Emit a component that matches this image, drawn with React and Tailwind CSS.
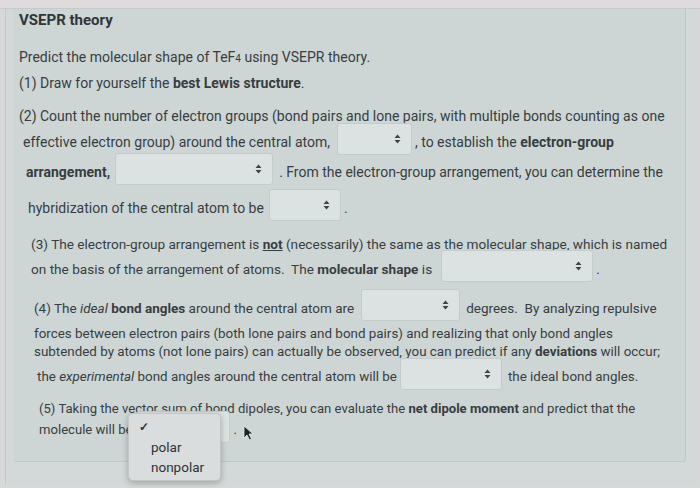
import React from 'react'

function Sel({ w }) {
  return (
    <span className={`relative inline-flex h-[32px] shrink-0 items-center rounded-[3px] border border-[#c4cccb] bg-[#dce2e1] ${w}`}>
      <svg className="absolute right-[10px] top-1/2 -translate-y-1/2" width="7" height="10" viewBox="0 0 7 10">
        <path d="M3.5 0.5 L6.5 4 L0.5 4 Z M3.5 9.5 L6.5 6 L0.5 6 Z" fill="#3d4347" />
      </svg>
    </span>
  )
}

function Row({ mt, ml, size = 'text-[14px]', children }) {
  return (
    <div className={`flex h-[18px] items-center whitespace-nowrap ${mt} ${ml} ${size}`}>
      {children}
    </div>
  )
}

export default function App() {
  return (
    <div
      className="relative h-[488px] w-[700px] overflow-hidden bg-[#d6d9d8] text-[#373d41]"
      style={{ fontFamily: 'Roboto, "Noto Sans", sans-serif' }}
    >
      <div className="h-[9px] bg-[#dfdadb] border-b border-[#c6cbca]" />
      <div className="ml-[5px] mr-[2px] h-[476px] border-l border-[#c3c9c8] bg-[#d3d9d8] pl-[8px] pr-[12px]">
        <div className="h-[453px] rounded-b-[3px] border-b border-r border-[#c0c8c7] bg-[#cdd6d5] pt-[2px]">
          <Row mt="mt-[0px]" ml="ml-[5px]" size="text-[15px]">
            <b className="text-[#2f3539]">VSEPR theory</b>
          </Row>
          <Row mt="mt-[19px]" ml="ml-[5px]">
            Predict the molecular shape of TeF<sub className="text-[10px] relative top-[2px]">4</sub>&nbsp;using VSEPR theory.
          </Row>
          <Row mt="mt-[8px]" ml="ml-[5px]">
            (1) Draw for yourself the&nbsp;<b>best Lewis structure</b>.
          </Row>
          <Row mt="mt-[15px]" ml="ml-[5px]">
            (2) Count the number of electron groups (bond pairs and lone pairs, with multiple bonds counting as one
          </Row>
          <Row mt="mt-[8px]" ml="ml-[9px]">
            effective electron group) around the central atom,
            <span className="ml-[7px]"><Sel w="w-[75px]" /></span>
            <span className="ml-[3px]">, to establish the&nbsp;<b>electron-group</b></span>
          </Row>
          <Row mt="mt-[12px]" ml="ml-[12px]">
            <b>arrangement,</b>
            <span className="ml-[5px]"><Sel w="w-[158px]" /></span>
            <span className="ml-[6px]">. From the electron-group arrangement, you can determine the</span>
          </Row>
          <Row mt="mt-[18px]" ml="ml-[14px]">
            hybridization of the central atom to be
            <span className="ml-[5px]"><Sel w="w-[72px]" /></span>
            <span className="ml-[3px]">.</span>
          </Row>
          <Row mt="mt-[18px]" ml="ml-[17px]" size="text-[13.6px]">
            (3) The electron-group arrangement is&nbsp;<b className="underline">not</b>&nbsp;(necessarily) the same as the molecular shape, which is named
          </Row>
          <Row mt="mt-[7px]" ml="ml-[17px]" size="text-[13.6px]">
            on the basis of the arrangement of atoms.&nbsp; The&nbsp;<b>molecular shape</b>&nbsp;is
            <span className="ml-[9px]"><Sel w="w-[152px]" /></span>
            <span className="ml-[3px]">.</span>
          </Row>
          <Row mt="mt-[21px]" ml="ml-[20px]" size="text-[13.5px]">
            (4) The&nbsp;<i>ideal</i>&nbsp;<b>bond angles</b>&nbsp;around the central atom are
            <span className="ml-[7px]"><Sel w="w-[99px]" /></span>
            <span className="ml-[6px]">degrees.&nbsp; By analyzing repulsive</span>
          </Row>
          <Row mt="mt-[8px]" ml="ml-[20px]" size="text-[13.4px]">
            forces between electron pairs (both lone pairs and bond pairs) and realizing that only bond angles
          </Row>
          <Row mt="mt-[0px]" ml="ml-[20px]" size="text-[13.4px]">
            subtended by atoms (not lone pairs) can actually be observed, you can predict if any&nbsp;<b>deviations</b>&nbsp;will occur;
          </Row>
          <Row mt="mt-[7px]" ml="ml-[23px]" size="text-[13.4px]">
            the&nbsp;<i>experimental</i>&nbsp;bond angles around the central atom will be
            <span className="ml-[3px]"><Sel w="w-[102px]" /></span>
            <span className="ml-[6px]">the ideal bond angles.</span>
          </Row>
          <Row mt="mt-[14px]" ml="ml-[25px]" size="text-[13.1px]">
            (5) Taking the vector sum of bond dipoles, you can evaluate the&nbsp;<b>net dipole moment</b>&nbsp;and predict that the
          </Row>
          <Row mt="mt-[3px]" ml="ml-[25px]" size="text-[13.1px]">
            molecule will be
            <span className="ml-[4px]"><Sel w="w-[94px]" /></span>
            <span className="ml-[3px]">.</span>
            <svg className="ml-[6px] mt-[6px]" width="12" height="16" viewBox="0 0 12 16">
              <path d="M1 1 L1 13 L4 10 L6.5 15 L8.5 14 L6 9 L10 9 Z" fill="#1f2326" stroke="#e8eaea" strokeWidth="0.8" />
            </svg>
          </Row>
        </div>
      </div>

      <div className="absolute left-[128px] top-[413px] w-[93px] rounded-[5px] border border-[#c2c6c6] bg-[#dadddd] py-[3px] text-[13.5px] text-[#2e3337] shadow-[0_2px_6px_rgba(0,0,0,0.25)]">
        <div className="flex h-[20px] items-center pl-[10px]">
          <span className="text-[12px] font-bold">✓</span>
        </div>
        <div className="flex h-[20px] items-center pl-[22px]">polar</div>
        <div className="flex h-[20px] items-center pl-[22px]">nonpolar</div>
      </div>
    </div>
  )
}
